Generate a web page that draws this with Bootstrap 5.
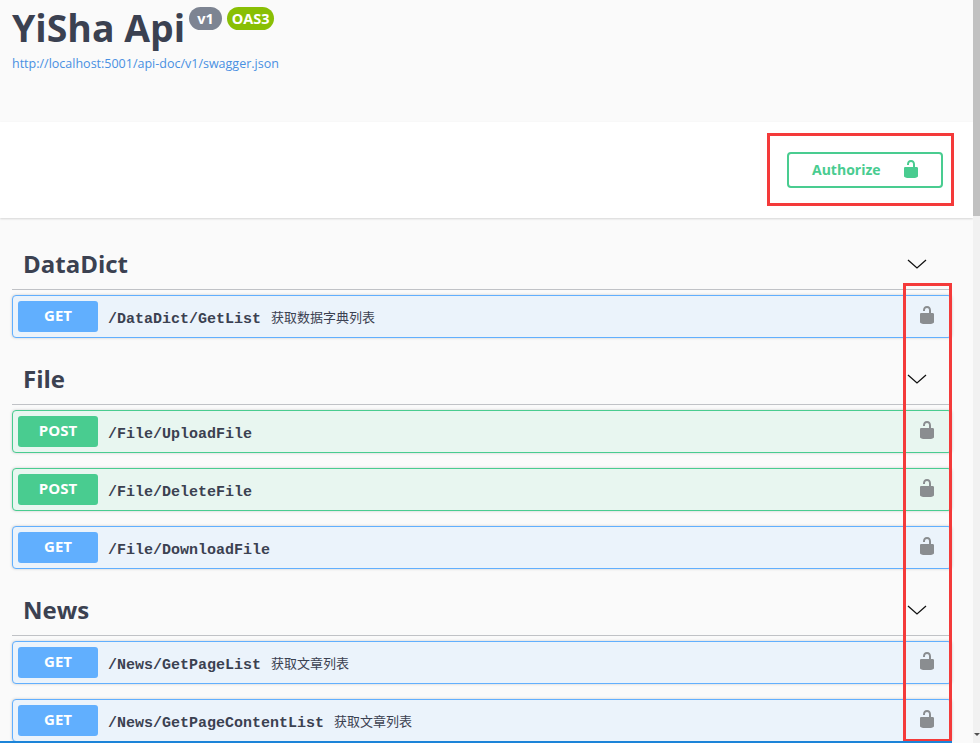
<!doctype html>
<html lang="en">
<head>
<meta charset="utf-8">
<title>YiSha Api</title>
<link rel="stylesheet" href="https://cdn.jsdelivr.net/npm/bootstrap@5.3.0/dist/css/bootstrap.min.css">
<style>
html,body{height:743px;overflow:hidden;background:#fafafa}
body{font-family:"Open Sans","Noto Sans CJK SC",sans-serif;color:#3b4151}
.page-shell{height:743px;position:relative;overflow:hidden}
.main-col{width:973px;flex:none}
.sb-track{width:7px;flex:none;background:#f1f1f1;position:relative}
.sb-thumb{height:216px;background:#c1c1c1}
.sb-arrow{position:absolute;left:1px;bottom:7px;width:0;height:0;border-left:3px solid transparent;border-right:3px solid transparent;border-top:3px solid #505050}
.info-block{height:122px;padding:8px 12px 0;background:#fafafa}
.api-title{font-size:37.4px;font-weight:700;line-height:40px;margin:0;color:#3b4151}
.ver-tag{display:inline-block;height:23px;line-height:23px;border-radius:12px;color:#fff;font-size:14.5px;font-weight:700;text-align:center;vertical-align:top;margin-top:-1px}
.ver-v1{width:33px;background:#7d8492;margin-left:4px}
.ver-oas{width:47px;background:#89bf04;margin-left:5px}
.spec-link{display:block;font-size:12.5px;line-height:16px;margin-top:8px;color:#4990e2;text-decoration:none}
.auth-bar{height:96px;background:#fff;box-shadow:0 1px 2px rgba(0,0,0,.15);padding:30px 30px 0 0;position:relative}
.auth-btn{width:156px;height:36px;border:2px solid #49cc90;border-radius:4px;background:transparent;color:#49cc90;font-size:14px;font-weight:700;padding:0 20px 2px 23px}
.ops-wrap{padding:0 21px 0 12px}
.tag-head{height:52px;border-bottom:1px solid rgba(59,65,81,.3);padding:0 25px 0 11px;margin-bottom:5px}
.tag-first{margin-top:20px}
.tag-name{font-size:24px;font-weight:700;margin:0;line-height:32px;color:#3b4151}
.op-row{height:43px;border:1px solid;border-radius:4px;box-shadow:0 0 3px rgba(0,0,0,.19);padding:0 14px 0 5px;margin-bottom:15px}
.op-last{margin-bottom:0}
.op-get{background:#ebf3fb;border-color:#61affe}
.op-post{background:#e8f6f0;border-color:#49cc90}
.method-pill{width:80px;height:31px;border-radius:3px;color:#fff;font-size:15px;font-weight:700;text-align:center;line-height:29px;flex:none}
.op-get .method-pill{background:#61affe}
.op-post .method-pill{background:#49cc90}
.op-path{font-family:"Liberation Mono","DejaVu Sans Mono",monospace;font-size:15px;font-weight:700;margin-left:10px;padding-top:7px;color:#3b4151}
.op-desc{font-family:"Noto Sans CJK SC",sans-serif;font-size:13px;margin-left:10px;color:#3b4151}
.lock-ic{width:20px;height:20px;fill:#8a8d90;flex:none;margin-top:-4px}
.lock-green{fill:#49cc90;width:20px;height:20px;margin-top:0}
.chev{width:20px;height:20px;flex:none}
.mark-box{position:absolute;border:3px solid #f43a3a;pointer-events:none}
.mark-auth{left:767px;top:133px;width:187px;height:73px}
.mark-locks{left:903px;top:283px;width:49px;height:459px}
.bottom-rule{position:absolute;left:0;bottom:0;width:952px;height:2px;background:#1c84d8}
</style>
</head>
<body>
<svg width="0" height="0" class="position-absolute">
  <defs>
    <symbol id="unlocked" viewBox="0 0 20 20"><path d="M15.8 8H14V5.6C14 2.703 12.665 1 10 1 7.334 1 6 2.703 6 5.6V6h2v-.801C8 3.754 8.797 3 10 3c1.203 0 2 .754 2 2.199V8H4c-.553 0-1 .646-1 1.199V17c0 .549.428 1.139.951 1.307l1.197.387C5.672 18.861 6.55 19 7.1 19h5.8c.549 0 1.428-.139 1.951-.307l1.196-.387c.524-.167.953-.757.953-1.306V9.199C17 8.646 16.352 8 15.8 8z"/></symbol>
    <symbol id="chevron" viewBox="0 0 20 20"><path d="M1 6l9 8 9-8" fill="none" stroke="#111" stroke-width="1.3"/></symbol>
  </defs>
</svg>
<div class="page-shell d-flex">
  <div class="main-col">
    <div class="info-block">
      <h1 class="api-title">YiSha Api<span class="ver-tag ver-v1">v1</span><span class="ver-tag ver-oas">OAS3</span></h1>
      <a class="spec-link" href="#">http://localhost:5001/api-doc/v1/swagger.json</a>
    </div>
    <div class="auth-bar d-flex justify-content-end align-items-start">
      <button class="auth-btn d-flex align-items-center justify-content-between" type="button">Authorize<svg class="lock-green"><use href="#unlocked"/></svg></button>
    </div>
    <div class="ops-wrap">
      <div class="tag-head tag-first d-flex align-items-center justify-content-between"><h3 class="tag-name">DataDict</h3><svg class="chev"><use href="#chevron"/></svg></div>
      <div class="op-row op-get d-flex align-items-center"><span class="method-pill">GET</span><span class="op-path">/DataDict/GetList</span><span class="op-desc">获取数据字典列表</span><svg class="lock-ic ms-auto"><use href="#unlocked"/></svg></div>

      <div class="tag-head d-flex align-items-center justify-content-between"><h3 class="tag-name">File</h3><svg class="chev"><use href="#chevron"/></svg></div>
      <div class="op-row op-post d-flex align-items-center"><span class="method-pill">POST</span><span class="op-path">/File/UploadFile</span><svg class="lock-ic ms-auto"><use href="#unlocked"/></svg></div>
      <div class="op-row op-post d-flex align-items-center"><span class="method-pill">POST</span><span class="op-path">/File/DeleteFile</span><svg class="lock-ic ms-auto"><use href="#unlocked"/></svg></div>
      <div class="op-row op-get d-flex align-items-center"><span class="method-pill">GET</span><span class="op-path">/File/DownloadFile</span><svg class="lock-ic ms-auto"><use href="#unlocked"/></svg></div>

      <div class="tag-head d-flex align-items-center justify-content-between"><h3 class="tag-name">News</h3><svg class="chev"><use href="#chevron"/></svg></div>
      <div class="op-row op-get d-flex align-items-center"><span class="method-pill">GET</span><span class="op-path">/News/GetPageList</span><span class="op-desc">获取文章列表</span><svg class="lock-ic ms-auto"><use href="#unlocked"/></svg></div>
      <div class="op-row op-get op-last d-flex align-items-center"><span class="method-pill">GET</span><span class="op-path">/News/GetPageContentList</span><span class="op-desc">获取文章列表</span><svg class="lock-ic ms-auto"><use href="#unlocked"/></svg></div>
    </div>
  </div>
  <div class="sb-track"><div class="sb-thumb"></div><div class="sb-arrow"></div></div>
  <div class="mark-box mark-auth"></div>
  <div class="mark-box mark-locks"></div>
  <div class="bottom-rule"></div>
</div>
<script src="https://cdn.jsdelivr.net/npm/bootstrap@5.3.0/dist/js/bootstrap.bundle.min.js"></script>
</body>
</html>
